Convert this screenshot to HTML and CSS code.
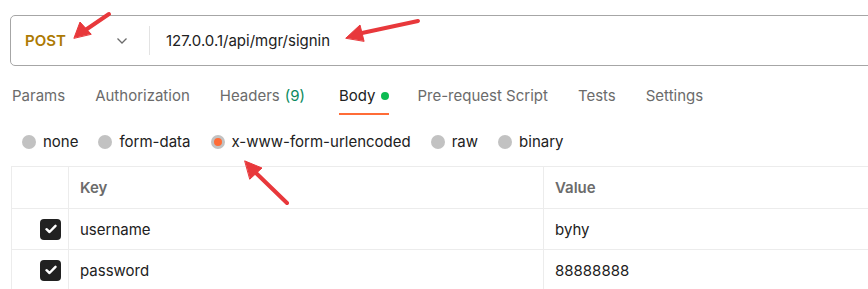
FILE: index.html
```html
<!DOCTYPE html>
<html lang="en">
<head>
    <meta charset="UTF-8">
    <title>Request</title>
    <link rel="stylesheet" href="styles.css">
</head>
<body>
    <div class="page">
        <div class="url-bar">
            <div class="method">
                <span class="method-name">POST</span>
                <svg class="chevron" width="12" height="8" viewBox="0 0 12 8"><path d="M1.5 1.5 L6 6 L10.5 1.5" fill="none" stroke="#6b6b6b" stroke-width="1.3"/></svg>
            </div>
            <div class="url">127.0.0.1/api/mgr/signin</div>
        </div>

        <nav class="tabs">
            <span class="tab">Params</span>
            <span class="tab">Authorization</span>
            <span class="tab">Headers <span class="count">(9)</span></span>
            <span class="tab active">Body <span class="dot"></span></span>
            <span class="tab">Pre-request Script</span>
            <span class="tab">Tests</span>
            <span class="tab">Settings</span>
        </nav>

        <div class="body-types">
            <label class="radio"><span class="circle"></span>none</label>
            <label class="radio"><span class="circle"></span>form-data</label>
            <label class="radio selected"><span class="circle"></span>x-www-form-urlencoded</label>
            <label class="radio"><span class="circle"></span>raw</label>
            <label class="radio"><span class="circle"></span>binary</label>
        </div>

        <table class="params">
            <tr class="head">
                <td class="check-col"></td>
                <td class="key-col">Key</td>
                <td>Value</td>
            </tr>
            <tr>
                <td class="check-col"><span class="checkbox"><svg width="12" height="10" viewBox="0 0 12 10"><path d="M1.5 5.2 L4.5 8 L10.5 1.8" fill="none" stroke="#fff" stroke-width="2.4" stroke-linecap="round" stroke-linejoin="round"/></svg></span></td>
                <td class="key-col">username</td>
                <td>byhy</td>
            </tr>
            <tr>
                <td class="check-col"><span class="checkbox"><svg width="12" height="10" viewBox="0 0 12 10"><path d="M1.5 5.2 L4.5 8 L10.5 1.8" fill="none" stroke="#fff" stroke-width="2.4" stroke-linecap="round" stroke-linejoin="round"/></svg></span></td>
                <td class="key-col">password</td>
                <td>88888888</td>
            </tr>
        </table>

        <!-- red annotation arrows drawn over the screenshot -->
        <svg class="annotations" width="868" height="289" viewBox="0 0 868 289">
            <g fill="#e8383b" stroke="#e8383b" stroke-linecap="round">
                <line x1="109" y1="14" x2="84" y2="31" stroke-width="4"/>
                <polygon points="74,38 80,22 91,34" stroke-width="1"/>
                <line x1="418" y1="21" x2="362" y2="33" stroke-width="4"/>
                <polygon points="346,38 360,25 364,41" stroke-width="1"/>
                <line x1="287" y1="203" x2="256" y2="173" stroke-width="4"/>
                <polygon points="245,161 262,168 250,179" stroke-width="1"/>
            </g>
        </svg>
    </div>
</body>
</html>
```

FILE: styles.css
```css
body {
    margin: 0;
    background: #fff;
    font-family: Inter, "Open Sans", sans-serif;
    font-size: 15px;
    color: #212121;
    overflow: hidden;
}

.page {
    position: relative;
    width: 868px;
    height: 289px;
    overflow: hidden;
    padding-top: 15px;
    box-sizing: border-box;
}

.url-bar {
    display: flex;
    align-items: center;
    height: 51px;
    width: 900px;
    margin-left: 10px;
    border: 1px solid #a6a6a6;
    border-radius: 5px;
    box-sizing: border-box;
}

.method {
    display: flex;
    align-items: center;
    justify-content: space-between;
    width: 139px;
    height: 29px;
    padding: 0 21px 0 14px;
    box-sizing: border-box;
    border-right: 1px solid #e3e3e3;
}

.method-name {
    color: #ad7a03;
    font-weight: 600;
    font-size: 15px;
}

.url {
    padding-left: 16px;
    font-size: 15px;
    color: #212121;
}

.tabs {
    display: flex;
    gap: 30px;
    height: 38px;
    margin-top: 11px;
    padding-left: 12px;
    align-items: stretch;
}

.tab {
    display: flex;
    align-items: center;
    color: #6b6b6b;
    font-size: 15px;
    border-bottom: 2px solid transparent;
    box-sizing: border-box;
    padding-top: 1px;
}

.tab .count {
    color: #0b8a5e;
    margin-left: 5px;
}

.tab.active {
    color: #212121;
    border-bottom-color: #ff6c37;
    margin-left: 4px;
    margin-right: -2px;
}

.tab .dot {
    display: inline-block;
    width: 8px;
    height: 8px;
    border-radius: 50%;
    background: #0cbb52;
    margin-left: 6px;
}

.body-types {
    display: flex;
    gap: 20px;
    height: 49px;
    padding-top: 2px;
    align-items: center;
    padding-left: 22px;
}

.radio {
    display: flex;
    align-items: center;
    gap: 7px;
    color: #212121;
    font-size: 15px;
}

.circle {
    width: 14px;
    height: 14px;
    border-radius: 50%;
    background: #c2c2c2;
    box-sizing: border-box;
}

.radio.selected .circle {
    background: #ff6c37;
    border: 3px solid #c2c2c2;
}

.params {
    margin-left: 11px;
    width: 900px;
    border-collapse: collapse;
    font-size: 15px;
}

.params td {
    border: 1px solid #ececec;
    padding: 0 0 0 11px;
    height: 41px;
    box-sizing: border-box;
}

.params .head td {
    height: 42px;
    color: #6b6b6b;
    font-weight: 600;
}

.params .check-col {
    width: 57px;
    padding: 0 7px 0 0;
    text-align: right;
}

.params .key-col {
    width: 475px;
}

.checkbox {
    display: inline-flex;
    align-items: center;
    justify-content: center;
    width: 21px;
    height: 21px;
    border-radius: 4px;
    background: #212121;
    vertical-align: middle;
}

.annotations {
    position: absolute;
    top: 0;
    left: 0;
    pointer-events: none;
}
```
